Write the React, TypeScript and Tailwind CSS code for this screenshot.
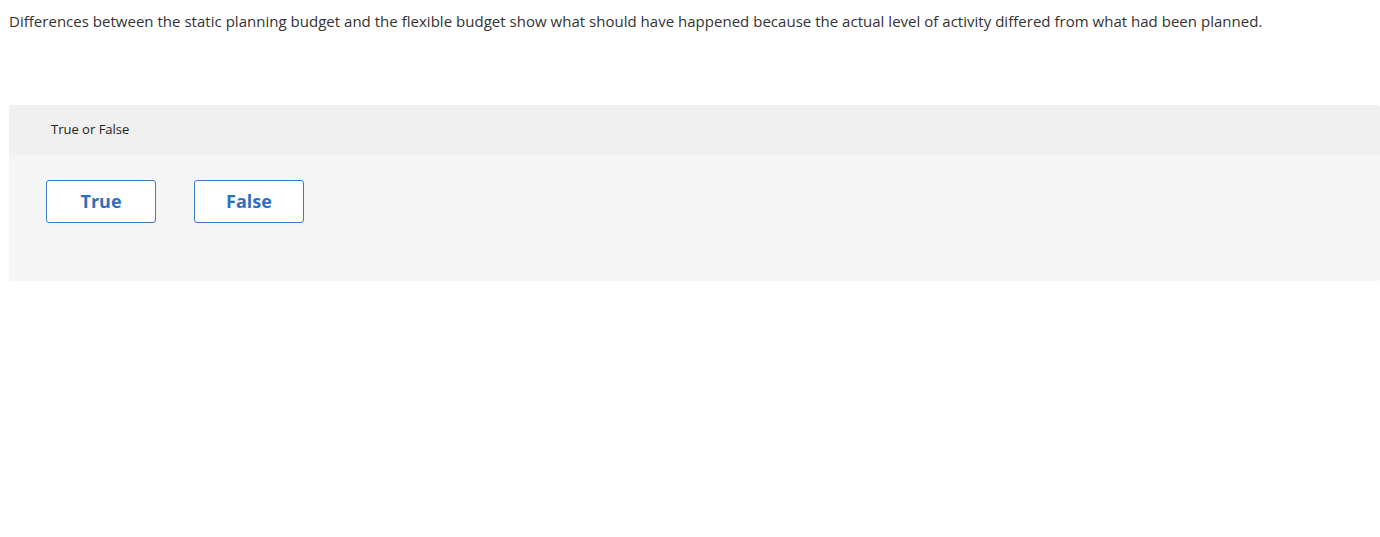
export default function App() {
  return (
    <div className="min-h-[537px] bg-white text-[#333] [font-family:'Open_Sans',sans-serif]">
      {/* Question */}
      <p className="pl-[9px] pt-[10px] text-[15px] leading-[22px] tracking-[0.02px]">
        Differences between the static planning budget and the flexible budget show what should have happened because the actual level of activity differed from what had been planned.
      </p>

      {/* Answer panel */}
      <div className="ml-[9px] mt-[73px] overflow-hidden rounded-[3px]">
        <div className="flex h-[50px] items-center bg-[#f0f0f0] pl-[42px] text-[13px] text-[#222]">
          True or False
        </div>
        <div className="flex h-[126px] items-start gap-[38px] bg-[#f5f5f5] pl-[37px] pt-[25px]">
          <button className="h-[43px] w-[110px] rounded-[3px] border border-[#3a7bc8] bg-white text-[18px] font-bold text-[#2f70bd]">
            True
          </button>
          <button className="h-[43px] w-[110px] rounded-[3px] border border-[#3a7bc8] bg-white text-[18px] font-bold text-[#2f70bd]">
            False
          </button>
        </div>
      </div>
    </div>
  );
}
